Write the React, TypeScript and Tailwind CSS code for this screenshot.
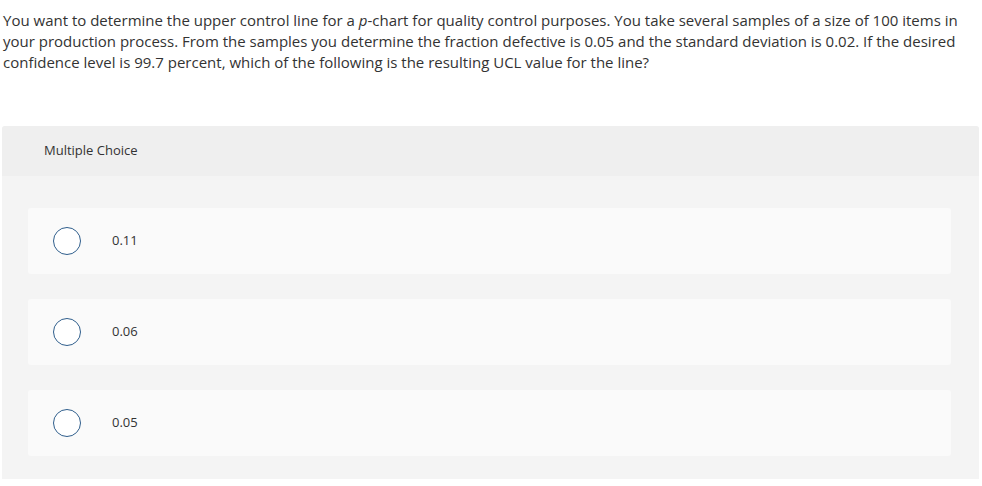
const options = ["0.11", "0.06", "0.05"];

export default function App() {
  return (
    <div className="w-[982px] h-[486px] bg-white pt-[10px]">
      <p
        className="px-[3px] text-[15px] leading-[21px] text-[#333] whitespace-nowrap"
        style={{ fontFamily: "'Open Sans', sans-serif" }}
      >
        You want to determine the upper control line for a <i>p</i>-chart for quality control purposes. You take several
        samples of a size of 100 items in
        <br />
        your production process. From the samples you determine the fraction defective is 0.05 and the standard deviation
        is 0.02. If the desired
        <br />
        confidence level is 99.7 percent, which of the following is the resulting UCL value for the line?
      </p>

      <div className="mt-[53px] ml-[2px] w-[977px] rounded-t-[3px] bg-[#f4f4f4] pb-[23px]">
        <div
          className="h-[50px] bg-[#efefef] rounded-t-[3px] flex items-center pl-[42px] text-[13px] text-[#333]"
          style={{ fontFamily: "'Open Sans', sans-serif" }}
        >
          Multiple Choice
        </div>
        <div className="flex flex-col gap-[25px] pt-[32px] pl-[26px] pr-[28px]">
          {options.map((o) => (
            <div key={o} className="h-[66px] rounded-[3px] bg-[#fafafa] flex items-center">
              <span className="ml-[25px] w-[28px] h-[28px] rounded-full border-[1.5px] border-[#2f5e8c] bg-white" />
              <span
                className="ml-[31px] text-[13px] text-[#333]"
                style={{ fontFamily: "'Open Sans', sans-serif" }}
              >
                {o}
              </span>
            </div>
          ))}
        </div>
      </div>
    </div>
  );
}
